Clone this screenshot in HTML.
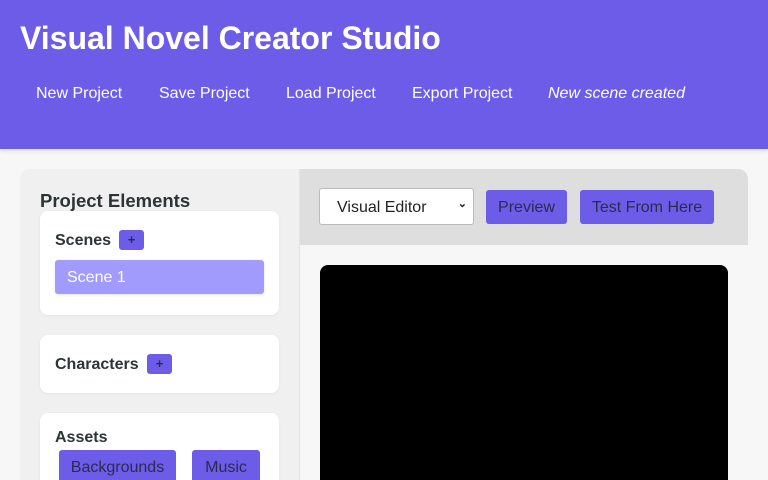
<!DOCTYPE html>
<html style="width:768px;height:480px;overflow:hidden"><head><style>
*{margin:0;padding:0;box-sizing:border-box}
body{width:768px;height:480px;overflow:hidden;background:#f7f7f7;font-family:"Liberation Sans",sans-serif;position:relative}
.a{position:absolute}
.hdr{left:0;top:0;width:768px;height:149px;background:#6c5ce7;box-shadow:0 2px 4px rgba(0,0,0,.1)}
h1{position:absolute;left:20px;top:20px;font-size:32px;color:#fff;font-weight:bold}
.nav{top:85px;font-size:16px;color:#fff}
.btn{background:#6c5ce7;color:#2d2a50;border-radius:3px;font-size:16px;text-align:center}
.card{background:#fff;border-radius:8px;left:40px;width:239px;box-shadow:0 1px 3px rgba(0,0,0,.05)}
.h3{font-size:16px;font-weight:bold;color:#2d3436}
.plus{background:#6c5ce7;border-radius:3px;width:25px;height:20px;color:#2d2a50;font-size:13px;text-align:center;line-height:20px;font-weight:bold}
</style></head><body>
<div class="a hdr"></div>
<h1>Visual Novel Creator Studio</h1>
<div class="a nav" style="left:36px">New Project</div>
<div class="a nav" style="left:159px">Save Project</div>
<div class="a nav" style="left:286px">Load Project</div>
<div class="a nav" style="left:412px">Export Project</div>
<div class="a nav" style="left:548px;font-style:italic">New scene created</div>

<div class="a" style="left:20px;top:169px;width:728px;height:311px;border-radius:10px 10px 0 0;background:#f0f0f0;overflow:hidden">
 <div class="a" style="left:279px;top:0;width:449px;height:76px;background:#dedede"></div>
 <div class="a" style="left:279px;top:76px;width:449px;height:300px;background:#f7f7f7"></div>
 <div class="a" style="left:279px;top:0;width:1px;height:320px;background:#e4e4e4"></div>
</div>
<div class="a h3" style="left:40px;top:190px;font-size:18.5px">Project Elements</div>
<div class="a card" style="top:211px;height:104px"></div>
<div class="a h3" style="left:55px;top:232px">Scenes</div>
<div class="a plus" style="left:119px;top:230px">+</div>
<div class="a" style="left:55px;top:260px;width:209px;height:34px;background:#a29bfe;border-radius:3px;color:#fff;font-size:16px;padding:9px 12px;box-shadow:0 1px 3px rgba(0,0,0,.1)">Scene 1</div>
<div class="a card" style="top:335px;height:58px"></div>
<div class="a h3" style="left:55px;top:356px">Characters</div>
<div class="a plus" style="left:147px;top:354px">+</div>
<div class="a card" style="top:413px;height:67px;border-radius:8px 8px 0 0"></div>
<div class="a h3" style="left:55px;top:429px">Assets</div>
<div class="a btn" style="left:59px;top:450px;width:117px;height:30px;line-height:35px;border-radius:3px 3px 0 0">Backgrounds</div>
<div class="a btn" style="left:192px;top:450px;width:68px;height:30px;line-height:35px;border-radius:3px 3px 0 0">Music</div>

<div class="a" style="left:319px;top:188px;width:155px;height:37px;background:#fff;border:1px solid #bbb;border-radius:3px;font-size:16px;color:#222;padding:10px 0 0 17px">Visual Editor<span style="position:absolute;right:6px;top:8px;font-size:11px;font-weight:bold">&#8964;</span></div>
<div class="a btn" style="left:486px;top:190px;width:81px;height:34px;line-height:36px">Preview</div>
<div class="a btn" style="left:580px;top:190px;width:134px;height:34px;line-height:36px">Test From Here</div>
<div class="a" style="left:320px;top:265px;width:408px;height:215px;background:#000;border-radius:8px 8px 0 0"></div>
</body></html>
